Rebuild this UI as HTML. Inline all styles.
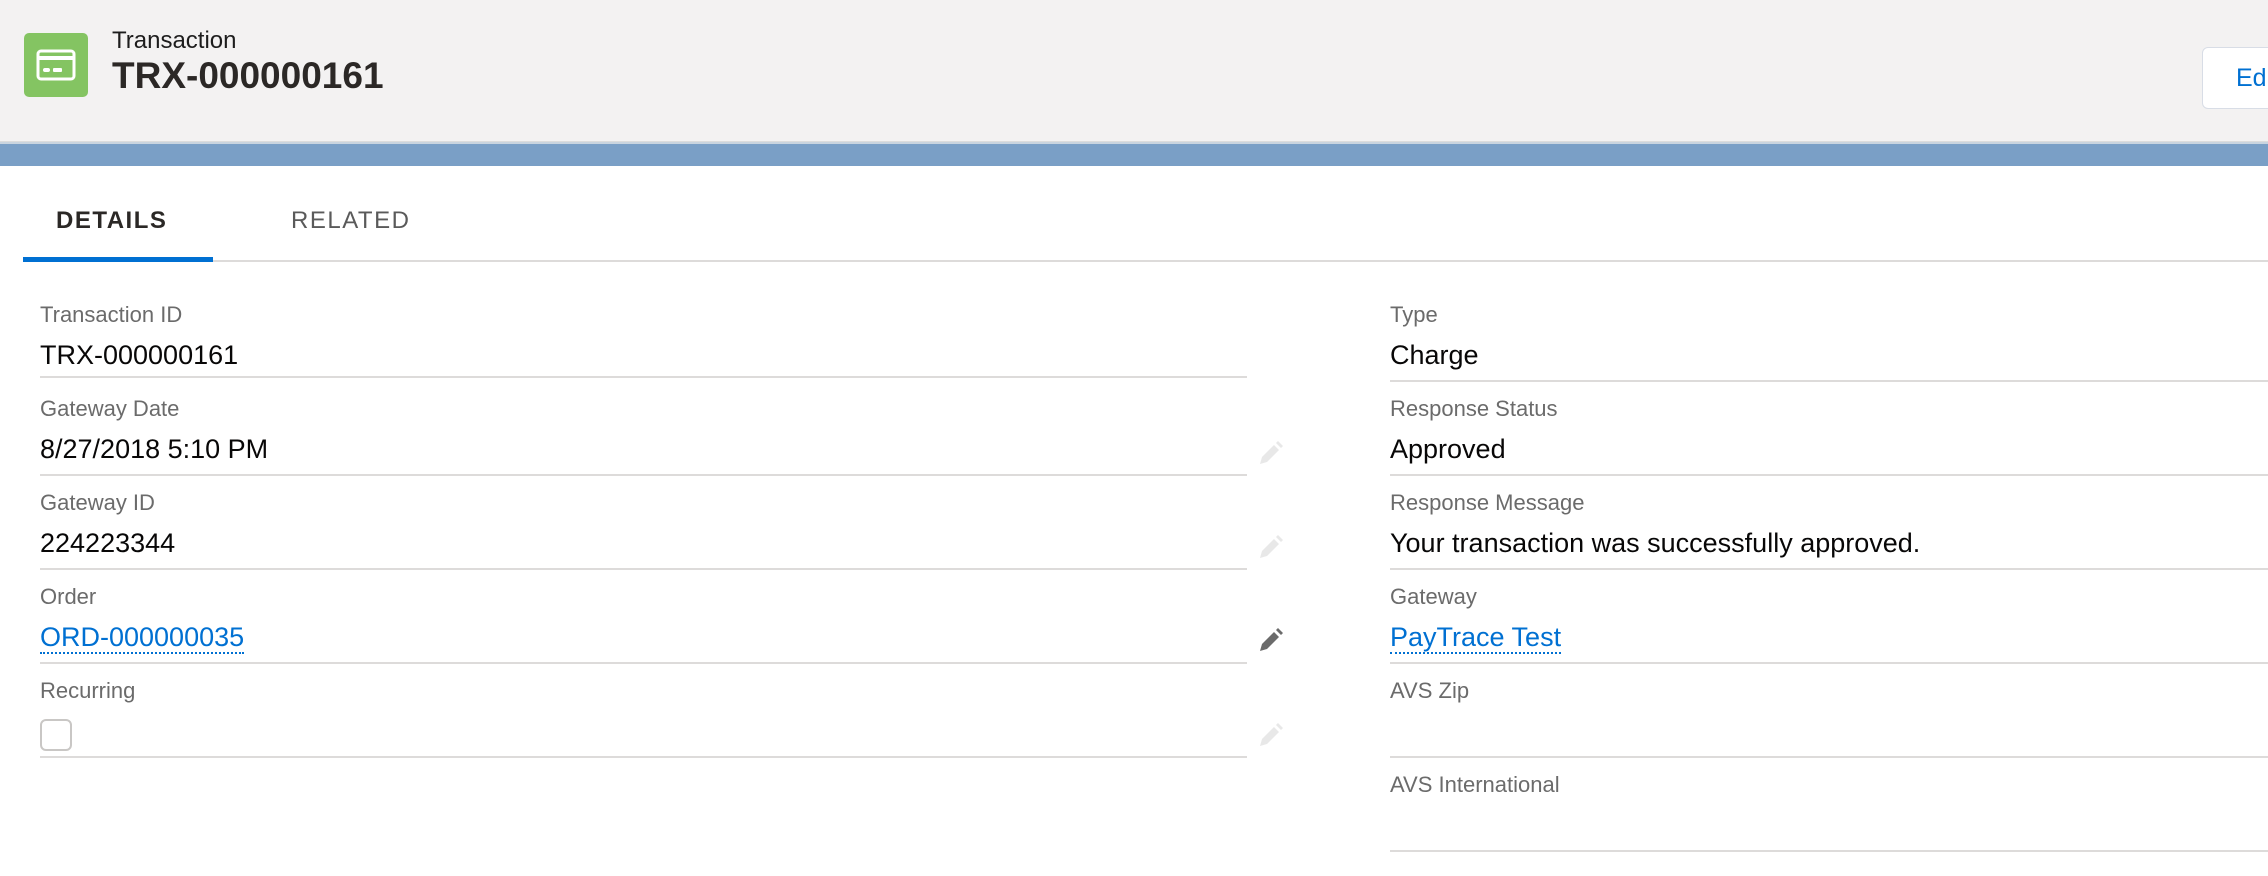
<!DOCTYPE html>
<html><head><meta charset="utf-8"><style>
*{margin:0;padding:0;box-sizing:border-box}
body{width:2268px;height:876px;overflow:hidden;background:#fff;font-family:"Liberation Sans",sans-serif;position:relative}
.hdr{position:absolute;left:0;top:0;width:2268px;height:142px;background:#f3f2f2;border-bottom:1px solid #dcdcdc}
.icon{position:absolute;left:24px;top:33px;width:64px;height:64px;background:#84c462;border-radius:5px}
.banner{position:absolute;left:0;top:142px;width:2268px;height:24px;background:#7a9fc6;border-top:2px solid #c9d4df}
.card{position:absolute;left:0;top:166px;width:2268px;height:710px;background:#fff}
.t1{position:absolute;left:112px;top:27px;font-size:24px;color:#1d1d1d}
.t2{position:absolute;left:112px;top:55px;font-size:37px;font-weight:bold;color:#2b2826}
.edit{position:absolute;left:2202px;top:47px;width:100px;height:62px;background:#fff;border:1px solid #d8dde6;border-radius:6px;font-size:25px;color:#0070d2;padding:16px 0 0 33px}
.tab{position:absolute;top:207px;font-size:24px;letter-spacing:1.5px}
.lbl{position:absolute;font-size:22px;color:#6b6b6b}
.val{position:absolute;font-size:27px;color:#080707;margin-top:3px}
.lnk{color:#0070d2;border-bottom:2px dotted #0070d2}
.ln{position:absolute;height:2px;background:#dddbda}
.pen{position:absolute;left:1256px;width:28px;height:28px}
</style></head><body>
<div class="hdr">
<div class="icon"><svg width="64" height="64" viewBox="0 0 64 64"><rect x="14" y="18" width="36" height="28" rx="3" fill="none" stroke="#fff" stroke-width="3"/><rect x="14" y="23" width="36" height="4" fill="#fff"/><rect x="19" y="35" width="7" height="4" rx="2" fill="#fff"/><rect x="29" y="35" width="9" height="4" rx="1" fill="#fff"/></svg></div>
<div class="t1">Transaction</div>
<div class="t2">TRX-000000161</div>
<div class="edit">Edit</div>
</div>
<div class="banner"></div>
<div class="card"></div>
<div class="tab" style="left:56px;font-weight:bold;color:#2b2826">DETAILS</div>
<div class="tab" style="left:291px;color:#5a5a5a">RELATED</div>
<div class="ln" style="left:23px;top:260px;width:2245px;background:#dddbda"></div>
<div style="position:absolute;left:23px;top:257px;width:190px;height:5px;background:#0070d2"></div>

<div class="lbl" style="left:40px;top:302px">Transaction ID</div>
<div class="val" style="left:40px;top:337px">TRX-000000161</div>
<div class="ln" style="left:40px;top:376px;width:1207px"></div>
<div class="lbl" style="left:40px;top:396px">Gateway Date</div>
<div class="val" style="left:40px;top:431px">8/27/2018 5:10 PM</div>
<div class="ln" style="left:40px;top:474px;width:1207px"></div>
<div class="lbl" style="left:40px;top:490px">Gateway ID</div>
<div class="val" style="left:40px;top:525px">224223344</div>
<div class="ln" style="left:40px;top:568px;width:1207px"></div>
<div class="lbl" style="left:40px;top:584px">Order</div>
<div class="val" style="left:40px;top:619px"><span class="lnk">ORD-000000035</span></div>
<div class="ln" style="left:40px;top:662px;width:1207px"></div>
<div class="lbl" style="left:40px;top:678px">Recurring</div>
<div style="position:absolute;left:40px;top:719px;width:32px;height:32px;border:2px solid #c9c7c5;border-radius:6px"></div>
<div class="ln" style="left:40px;top:756px;width:1207px"></div>

<div class="lbl" style="left:1390px;top:302px">Type</div>
<div class="val" style="left:1390px;top:337px">Charge</div>
<div class="ln" style="left:1390px;top:380px;width:878px"></div>
<div class="lbl" style="left:1390px;top:396px">Response Status</div>
<div class="val" style="left:1390px;top:431px">Approved</div>
<div class="ln" style="left:1390px;top:474px;width:878px"></div>
<div class="lbl" style="left:1390px;top:490px">Response Message</div>
<div class="val" style="left:1390px;top:525px">Your transaction was successfully approved.</div>
<div class="ln" style="left:1390px;top:568px;width:878px"></div>
<div class="lbl" style="left:1390px;top:584px">Gateway</div>
<div class="val" style="left:1390px;top:619px"><span class="lnk">PayTrace Test</span></div>
<div class="ln" style="left:1390px;top:662px;width:878px"></div>
<div class="lbl" style="left:1390px;top:678px">AVS Zip</div>
<div class="ln" style="left:1390px;top:756px;width:878px"></div>
<div class="lbl" style="left:1390px;top:772px">AVS International</div>
<div class="ln" style="left:1390px;top:850px;width:878px"></div>

<svg class="pen" style="top:440px" viewBox="0 0 28 28"><path d="M4 24l2-7L18 5l5 5-12 12z M20 3l2-2 5 5-2 2z" fill="#e8e8e8"/></svg>
<svg class="pen" style="top:534px" viewBox="0 0 28 28"><path d="M4 24l2-7L18 5l5 5-12 12z M20 3l2-2 5 5-2 2z" fill="#e8e8e8"/></svg>
<svg class="pen" style="top:627px" viewBox="0 0 28 28"><path d="M4 24l2-7L18 5l5 5-12 12z M20 3l2-2 5 5-2 2z" fill="#6b6b6b"/></svg>
<svg class="pen" style="top:722px" viewBox="0 0 28 28"><path d="M4 24l2-7L18 5l5 5-12 12z M20 3l2-2 5 5-2 2z" fill="#e8e8e8"/></svg>
</body></html>
